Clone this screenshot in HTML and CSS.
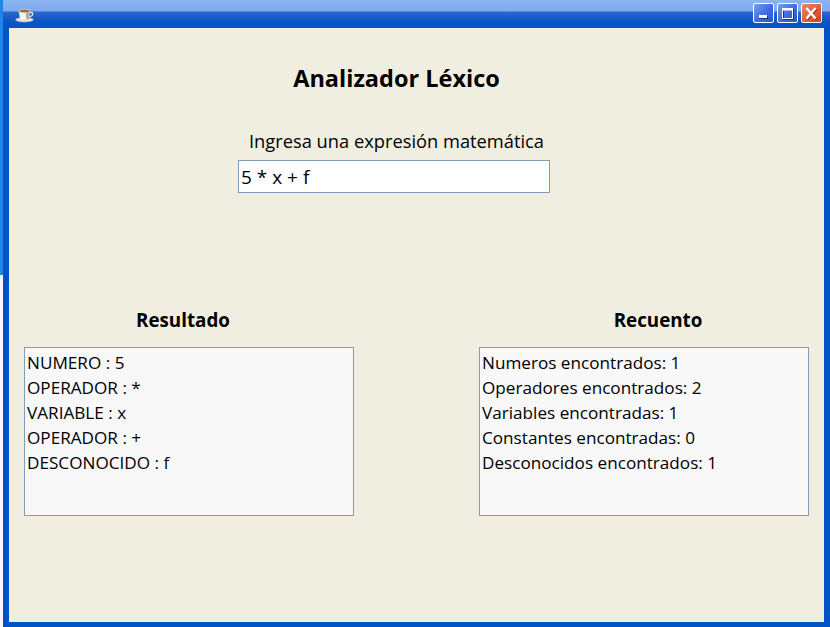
FILE: index.html
```html
<!DOCTYPE html>
<html lang="es">
<head>
  <meta charset="UTF-8" />
  <title>Analizador Léxico</title>
  <link rel="stylesheet" href="styles.css">
</head>
<body>

  <div class="window">
    <!-- Title bar -->
    <div class="titlebar">
      <svg class="cup" width="19" height="16" viewBox="0 0 20 16">
        <ellipse cx="10" cy="13" rx="9.5" ry="2.5" fill="#dfe2e6" stroke="#7f8590" stroke-width="0.5"/>
        <path d="M15 5.5h2.5q1.5 0 1 2t-4.5 2.5" fill="none" stroke="#eef0f2" stroke-width="1.3"/>
        <path d="M4 3.5h12l-1 7q-0.5 2.5-3 2.5h-4q-2.5 0-3-2.5z" fill="#f4f5f6"/>
        <path d="M11 4h5l-1 6.5q-0.5 2.5-3 2.5z" fill="#a9adb3"/>
        <ellipse cx="10" cy="3.8" rx="6" ry="1.8" fill="#a5682c" stroke="#e8e8e8" stroke-width="0.6"/>
      </svg>
      <div class="controls">
        <div class="ctl">
          <svg width="21" height="20" viewBox="0 0 21 20">
            <rect x="6" y="13" width="9" height="3" fill="#0d2f9c"/>
            <rect x="6" y="12" width="8" height="3" fill="#fff"/>
          </svg>
        </div>
        <div class="ctl">
          <svg width="21" height="20" viewBox="0 0 21 20">
            <rect x="6.5" y="6.5" width="10" height="10" fill="none" stroke="#0d2f9c"/>
            <rect x="5.5" y="5.5" width="10" height="10" fill="none" stroke="#fff"/>
            <rect x="5" y="5" width="11" height="2.5" fill="#fff"/>
          </svg>
        </div>
        <div class="ctl close">
          <svg width="21" height="20" viewBox="0 0 21 20">
            <path d="M5.5 5l9 10.5M14.5 5l-9 10.5" transform="translate(1 1)" stroke="#a8341a" stroke-width="2.4"/>
            <path d="M5.5 5l9 10.5M14.5 5l-9 10.5" stroke="#fff" stroke-width="2.4"/>
          </svg>
        </div>
      </div>
    </div>

    <!-- Form -->
    <div class="content">
      <div class="head">
        <h1>Analizador Léxico</h1>
        <div class="prompt">Ingresa una expresión matemática</div>
        <input class="expr" type="text" value="5 * x + f" />
      </div>

      <div class="panels">
        <div class="panel">
          <h2 class="left-title">Resultado</h2>
          <div class="box">
            <div>NUMERO : 5</div>
            <div>OPERADOR : *</div>
            <div>VARIABLE : x</div>
            <div>OPERADOR : +</div>
            <div>DESCONOCIDO : f</div>
          </div>
        </div>
        <div class="panel">
          <h2 class="right-title">Recuento</h2>
          <div class="box">
            <div>Numeros encontrados: 1</div>
            <div>Operadores encontrados: 2</div>
            <div>Variables encontradas: 1</div>
            <div>Constantes encontradas: 0</div>
            <div>Desconocidos encontrados: 1</div>
          </div>
        </div>
      </div>
    </div>
  </div>

</body>
</html>
```

FILE: styles.css
```css
* {
  box-sizing: border-box;
}
html, body {
  margin: 0;
  height: 100%;
  overflow: hidden;
}
body {
  font-family: "Open Sans", "Noto Sans", sans-serif;
  background: linear-gradient(to bottom, #1f87e8 0, #1f87e8 275px, #f4f7fb 275px);
  padding-left: 3px;
}
.window {
  height: 627px;
  display: flex;
  flex-direction: column;
  background: #0053c4;
  padding: 0 6px 5px;
}
.titlebar {
  height: 28px;
  margin: 0 -6px;
  padding: 0 8px 0 12px;
  display: flex;
  justify-content: space-between;
  background: linear-gradient(to bottom, #8ab4f2 0, #7fa9ee 11px, #2b69cf 12px, #0f56c6 20px, #0053c4 28px);
}
.cup {
  margin-top: 7px;
}
.controls {
  display: flex;
  gap: 3px;
}
.ctl {
  width: 21px;
  height: 20px;
  margin-top: 3px;
  border: 1px solid #fff;
  border-radius: 2px;
  background: linear-gradient(135deg, #7d9cec, #3f6be0 55%, #2a52cc);
  position: relative;
}
.ctl svg {
  position: absolute;
  left: -1px;
  top: -1px;
}
.close {
  background: linear-gradient(135deg, #ec8560, #e0603c 55%, #c9431e);
}
.content {
  flex: 1;
  background: #f0eee1;
  color: #000;
  display: flex;
  flex-direction: column;
}
.head {
  display: flex;
  flex-direction: column;
  align-items: center;
  padding-right: 40px;
}
h1 {
  font-size: 23.5px;
  font-weight: 700;
  line-height: 32px;
  margin: 34px 0 0;
}
.prompt {
  font-size: 18.3px;
  line-height: 25px;
  margin-top: 34px;
}
.expr {
  width: 312px;
  height: 33px;
  margin: 7px 0 0 -5px;
  padding: 0 2px;
  border: 1px solid #7f9db9;
  background: #fff;
  font: 19px "Open Sans", sans-serif;
  color: #000;
}
.panels {
  display: flex;
  justify-content: space-between;
  margin-top: 115px;
  padding: 0 15px;
}
.panel {
  width: 330px;
}
h2 {
  font-size: 18.8px;
  font-weight: 700;
  line-height: 25px;
  margin: 0 0 14px;
  text-align: center;
}
.left-title {
  padding-right: 12px;
}
.right-title {
  padding-left: 28px;
}
.box {
  height: 169px;
  padding: 2px 2px;
  border: 1px solid #7f9db9;
  background: #f8f8f8;
  font-size: 17.15px;
  line-height: 25px;
}
```
